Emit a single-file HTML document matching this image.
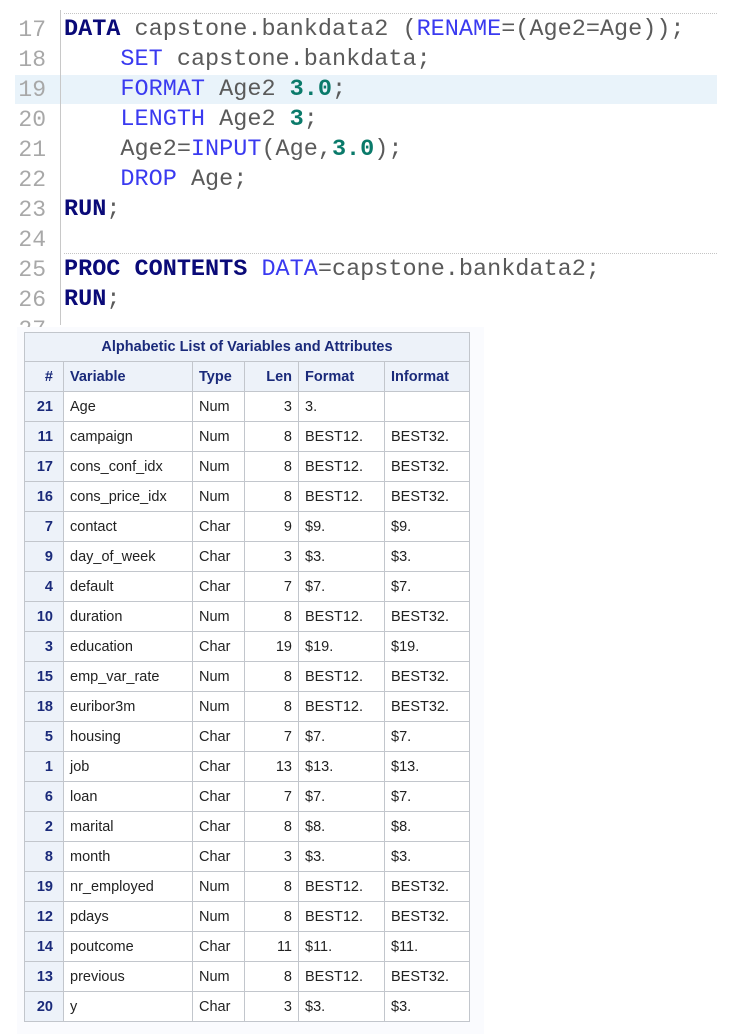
<!DOCTYPE html>
<html><head><meta charset="utf-8"><style>
*{margin:0;padding:0;box-sizing:border-box}
body{width:734px;height:1034px;background:#fff;position:relative;overflow:hidden;font-family:"Liberation Sans",sans-serif}
.ln{position:absolute;left:0;width:46px;text-align:right;font-family:"Liberation Mono",monospace;font-size:23px;color:#a8a8a8;line-height:30px}
.cd{position:absolute;left:64px;font-family:"Liberation Mono",monospace;font-size:23.5px;color:#5a5a5a;line-height:30px;white-space:pre}
.k{color:#0a0a78;font-weight:bold}
.b{color:#3a3af0}
.n{color:#0a7a6a;font-weight:bold}
.hl{position:absolute;left:15px;top:75px;width:702px;height:29px;background:#e9f3fa}
.sep{position:absolute;left:60px;top:10px;width:1px;height:315px;background:#c8c8c8}
.dot{position:absolute;left:64px;width:653px;border-top:1px dotted #c4c4c4}
.panel{position:absolute;left:17px;top:327px;width:467px;height:707px;background:#fafbfe}
table{position:absolute;left:24px;top:332px;border-collapse:collapse;font-size:14.5px;color:#222}
td,th{border:1px solid #c2c6cc;height:30px;padding:0 6px;white-space:nowrap;background:#fff}
th{background:#edf2f9;color:#1a2a7a;font-weight:bold;text-align:left}
th.t{text-align:center;height:29px}
td.h{background:#edf2f9;color:#1a2a7a;font-weight:bold;text-align:right;padding-right:10px}
td.r{text-align:right}
</style></head><body>
<div class="hl"></div>
<div class="sep"></div>
<div class="dot" style="top:13px"></div>
<div class="dot" style="top:253px"></div>
<div class="ln" style="top:15px">17<br>18<br>19<br>20<br>21<br>22<br>23<br>24<br>25<br>26<br>27</div>
<div class="cd" style="top:15px"><span class="k">DATA</span> capstone.bankdata2 (<span class="b">RENAME</span>=(Age2=Age));
    <span class="b">SET</span> capstone.bankdata;
    <span class="b">FORMAT</span> Age2 <span class="n">3.0</span>;
    <span class="b">LENGTH</span> Age2 <span class="n">3</span>;
    Age2=<span class="b">INPUT</span>(Age,<span class="n">3.0</span>);
    <span class="b">DROP</span> Age;
<span class="k">RUN</span>;

<span class="k">PROC CONTENTS</span> <span class="b">DATA</span>=capstone.bankdata2;
<span class="k">RUN</span>;</div>
<div class="panel"></div>
<table>
<tr><th class="t" colspan="6">Alphabetic List of Variables and Attributes</th></tr>
<tr><th style="width:39px;text-align:right;padding-right:10px">#</th><th style="width:129px">Variable</th><th style="width:52px">Type</th><th style="width:54px;text-align:right">Len</th><th style="width:86px">Format</th><th style="width:85px">Informat</th></tr>
<tr><td class="h">21</td><td>Age</td><td>Num</td><td class="r">3</td><td>3.</td><td></td></tr>
<tr><td class="h">11</td><td>campaign</td><td>Num</td><td class="r">8</td><td>BEST12.</td><td>BEST32.</td></tr>
<tr><td class="h">17</td><td>cons_conf_idx</td><td>Num</td><td class="r">8</td><td>BEST12.</td><td>BEST32.</td></tr>
<tr><td class="h">16</td><td>cons_price_idx</td><td>Num</td><td class="r">8</td><td>BEST12.</td><td>BEST32.</td></tr>
<tr><td class="h">7</td><td>contact</td><td>Char</td><td class="r">9</td><td>$9.</td><td>$9.</td></tr>
<tr><td class="h">9</td><td>day_of_week</td><td>Char</td><td class="r">3</td><td>$3.</td><td>$3.</td></tr>
<tr><td class="h">4</td><td>default</td><td>Char</td><td class="r">7</td><td>$7.</td><td>$7.</td></tr>
<tr><td class="h">10</td><td>duration</td><td>Num</td><td class="r">8</td><td>BEST12.</td><td>BEST32.</td></tr>
<tr><td class="h">3</td><td>education</td><td>Char</td><td class="r">19</td><td>$19.</td><td>$19.</td></tr>
<tr><td class="h">15</td><td>emp_var_rate</td><td>Num</td><td class="r">8</td><td>BEST12.</td><td>BEST32.</td></tr>
<tr><td class="h">18</td><td>euribor3m</td><td>Num</td><td class="r">8</td><td>BEST12.</td><td>BEST32.</td></tr>
<tr><td class="h">5</td><td>housing</td><td>Char</td><td class="r">7</td><td>$7.</td><td>$7.</td></tr>
<tr><td class="h">1</td><td>job</td><td>Char</td><td class="r">13</td><td>$13.</td><td>$13.</td></tr>
<tr><td class="h">6</td><td>loan</td><td>Char</td><td class="r">7</td><td>$7.</td><td>$7.</td></tr>
<tr><td class="h">2</td><td>marital</td><td>Char</td><td class="r">8</td><td>$8.</td><td>$8.</td></tr>
<tr><td class="h">8</td><td>month</td><td>Char</td><td class="r">3</td><td>$3.</td><td>$3.</td></tr>
<tr><td class="h">19</td><td>nr_employed</td><td>Num</td><td class="r">8</td><td>BEST12.</td><td>BEST32.</td></tr>
<tr><td class="h">12</td><td>pdays</td><td>Num</td><td class="r">8</td><td>BEST12.</td><td>BEST32.</td></tr>
<tr><td class="h">14</td><td>poutcome</td><td>Char</td><td class="r">11</td><td>$11.</td><td>$11.</td></tr>
<tr><td class="h">13</td><td>previous</td><td>Num</td><td class="r">8</td><td>BEST12.</td><td>BEST32.</td></tr>
<tr><td class="h">20</td><td>y</td><td>Char</td><td class="r">3</td><td>$3.</td><td>$3.</td></tr>
</table>
</body></html>
